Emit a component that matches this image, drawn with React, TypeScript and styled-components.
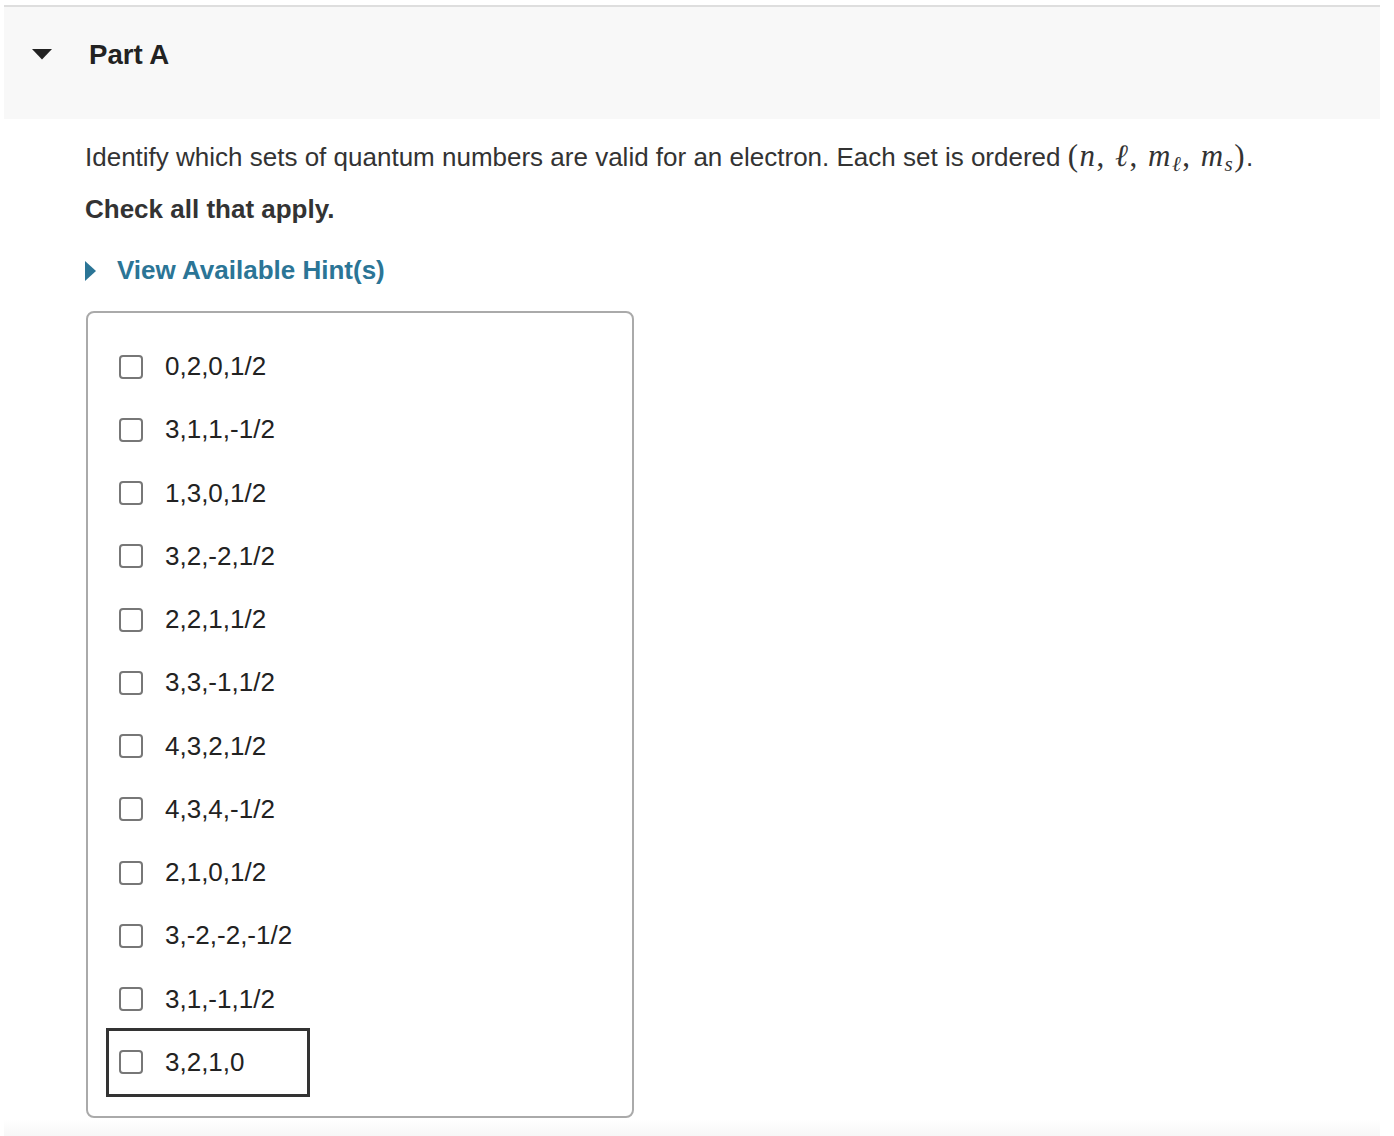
import styled, { createGlobalStyle } from 'styled-components';

const GlobalStyle = createGlobalStyle`
  html, body {
    margin: 0;
    padding: 0;
    background: #fff;
  }
  body {
    font-family: "Liberation Sans", Arial, Helvetica, sans-serif;
    color: #333;
  }
`;

const Page = styled.div`
  padding: 5px 14px 0 4px;
  width: 1376px;
`;

const Section = styled.section`
  border-top: 2px solid #dedede;
`;

const Header = styled.div`
  display: flex;
  align-items: flex-start;
  height: 112px;
  box-sizing: border-box;
  padding: 34px 0 0 28px;
  background: #f8f8f8;
`;

const HeaderRow = styled.div`
  display: flex;
  align-items: center;
  gap: 37px;
  height: 27px;
`;

const Title = styled.h2`
  margin: 0;
  font-size: 27.6px;
  line-height: 27px;
  font-weight: 700;
  color: #222;
`;

const Body = styled.div`
  padding: 0 0 0 81px;
`;

const Question = styled.p`
  margin: 22px 0 0;
  font-size: 26px;
  line-height: 30.7px;
  white-space: nowrap;
`;

const Math = styled.span`
  font-family: "Liberation Serif", "Times New Roman", serif;
  font-size: 31px;
  letter-spacing: 1.5px;
`;

const Var = styled.i`
  font-style: italic;
`;

const Sub = styled.sub`
  font-size: 0.68em;
  font-style: italic;
  vertical-align: -0.22em;
  line-height: 0;
`;

const Instruction = styled.p`
  margin: 21px 0 0;
  font-size: 26px;
  line-height: 30.7px;
  font-weight: 700;
`;

const HintToggle = styled.button`
  display: flex;
  align-items: center;
  gap: 21px;
  margin: 31px 0 0;
  padding: 0;
  border: 0;
  background: none;
  cursor: pointer;
  font-family: inherit;
  font-size: 26px;
  line-height: 30.7px;
  font-weight: 700;
  color: #2b7596;
`;

const Choices = styled.fieldset`
  margin: 25px 0 0 1px;
  width: 548px;
  box-sizing: border-box;
  border: 2px solid #aaa;
  border-radius: 8px;
  padding: 22px 0 22px 21px;
  min-inline-size: 0;
`;

const Option = styled.label<{ $focused?: boolean }>`
  display: flex;
  align-items: center;
  gap: 22px;
  width: 198px;
  height: 63.25px;
  box-sizing: border-box;
  padding-left: 10px;
  font-size: 26px;
  color: #222;
  cursor: pointer;
  outline: ${p => (p.$focused ? '3px solid #333' : 'none')};
  outline-offset: 0;
`;

const Box = styled.span`
  width: 24px;
  height: 24px;
  box-sizing: border-box;
  border: 2px solid #777;
  border-radius: 4px;
  background: #fff;
  flex-shrink: 0;
`;

const Fade = styled.div`
  height: 18px;
  margin-top: 1px;
  background: linear-gradient(#fff, #f6f6f6);
`;

const options = [
  '0,2,0,1/2',
  '3,1,1,-1/2',
  '1,3,0,1/2',
  '3,2,-2,1/2',
  '2,2,1,1/2',
  '3,3,-1,1/2',
  '4,3,2,1/2',
  '4,3,4,-1/2',
  '2,1,0,1/2',
  '3,-2,-2,-1/2',
  '3,1,-1,1/2',
  '3,2,1,0',
];

const App = () => {
  return (
    <Page>
      <GlobalStyle />
      <Section>
        <Header>
          <HeaderRow>
            <svg width="20" height="11" viewBox="0 0 20 11">
              <path d="M0 0 H20 L10 10.5 Z" fill="#222" />
            </svg>
            <Title>Part A</Title>
          </HeaderRow>
        </Header>
        <Body>
          <Question>
            Identify which sets of quantum numbers are valid for an electron. Each set is ordered{' '}
            <Math>
              (<Var>n</Var>, <Var>ℓ</Var>, <Var>m</Var>
              <Sub>ℓ</Sub>, <Var>m</Var>
              <Sub>s</Sub>)
            </Math>
            .
          </Question>
          <Instruction>Check all that apply.</Instruction>
          <HintToggle type="button">
            <svg width="11" height="20" viewBox="0 0 11 20">
              <path d="M0 0 L11 10 L0 20 Z" fill="#2b7596" />
            </svg>
            View Available Hint(s)
          </HintToggle>
          <Choices>
            {options.map((o, i) => (
              <Option key={o} $focused={i === options.length - 1}>
                <Box />
                {o}
              </Option>
            ))}
          </Choices>
        </Body>
        <Fade />
      </Section>
    </Page>
  );
};

export default App;
